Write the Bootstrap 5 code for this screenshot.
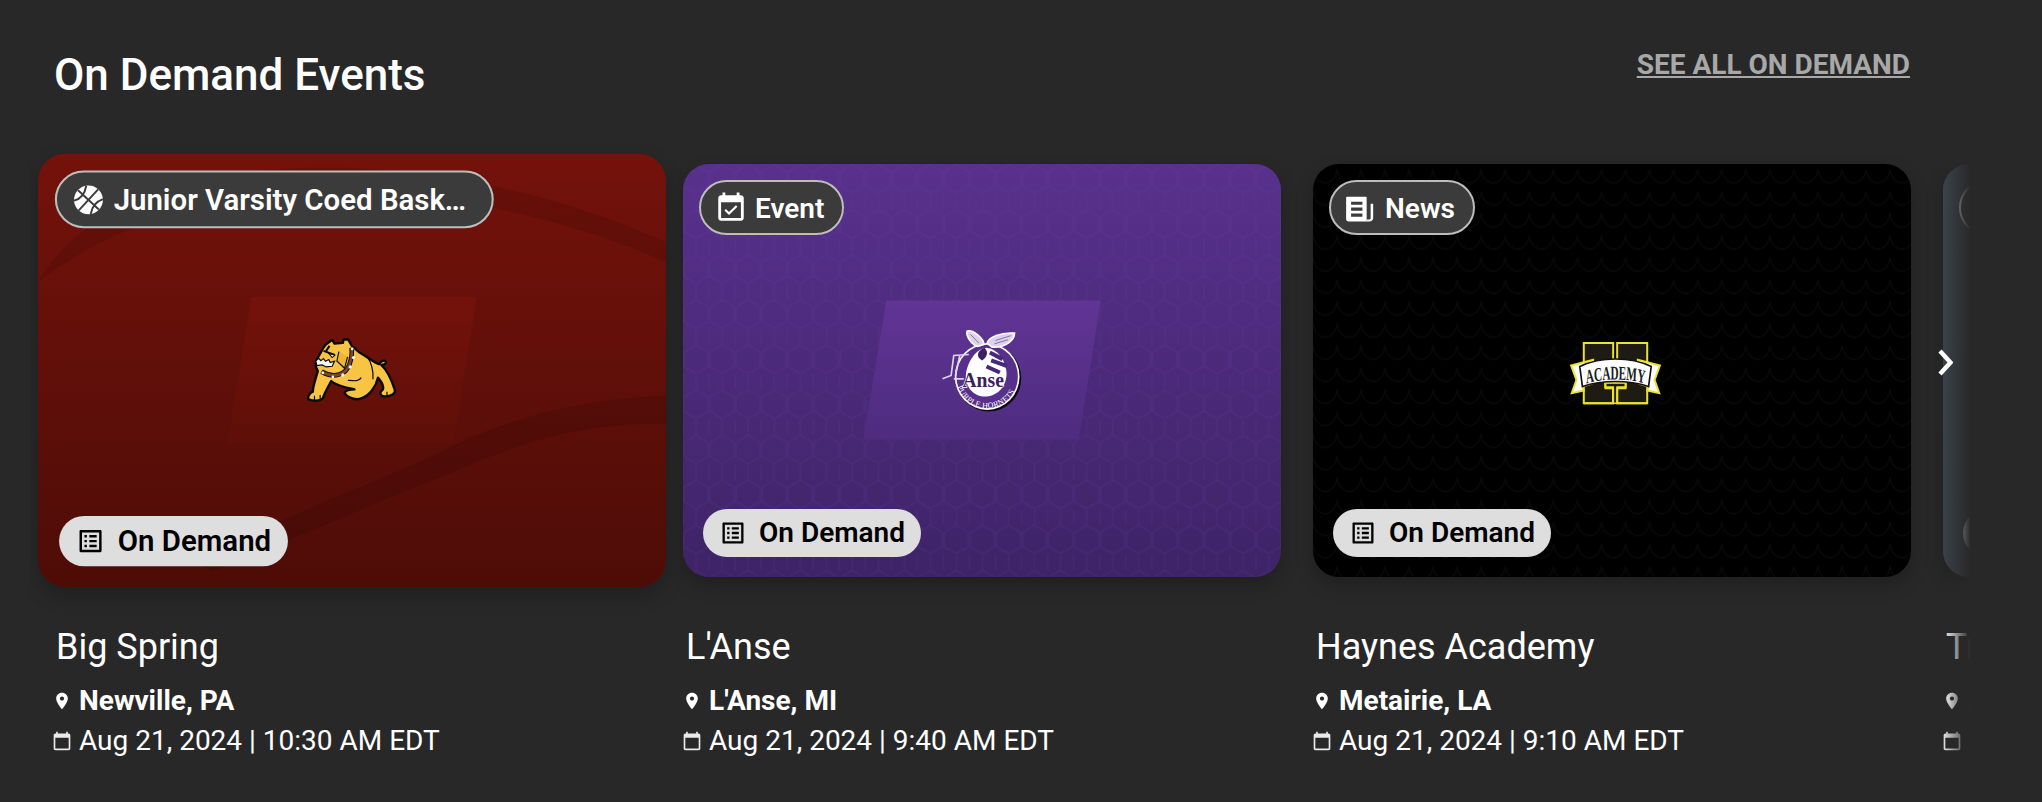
<!DOCTYPE html>
<html lang="en">
<head>
<meta charset="utf-8">
<title>On Demand Events</title>
<link href="https://cdn.jsdelivr.net/npm/bootstrap@5.3.0/dist/css/bootstrap.min.css" rel="stylesheet">
<style>
html,body{height:100%;}
body{background:#282828;color:#fff;font-family:Roboto,"Liberation Sans",sans-serif;overflow:hidden;}
.sec-head{padding:50px 132px 0 54px;height:140px;}
.sec-title{font-size:44px;font-weight:500;line-height:50px;margin:0;}
.see-all{font-size:28px;font-weight:700;line-height:32px;color:#a8a8a8;text-decoration:underline;margin-top:-1px;}
.see-all:hover{color:#a8a8a8;}
.rail-wrap{margin-left:30px;width:1942px;}
.rail{overflow:hidden;padding:24px 0 30px 23px;gap:32px;}
.slide{flex:0 0 598px;width:598px;}
.tile{height:413px;border-radius:26px;overflow:hidden;box-shadow:0 8px 18px rgba(0,0,0,.22);padding:16px 20px 20px 16px;}
.tile-hover{transform:scale(1.05);}
.tile-red{background:linear-gradient(#74120b,#4e0c07);}
.tile-purple{background:linear-gradient(#59318d,#3e2367);}
.tile-black{background:#000;}
.tile-slate{background:linear-gradient(100deg,#3d444e,#2b2f35);}
.art{position:absolute;inset:0;width:100%;height:100%;}
.pill-top,.pill-bottom{position:relative;border-radius:60px;font-size:28px;font-weight:600;line-height:1;white-space:nowrap;}
.pill-top{height:55px;background:#3b3b3b;border:2px solid #bdbdbd;padding:0 18px 0 13px;gap:7px;color:#fff;}
.pill-long{width:418px;padding-right:22px;}
.pill-label{padding-top:2px;}
.pill-bottom{height:48px;background:#dedede;color:#000;margin-left:4px;padding:0 16px 0 16px;gap:12px;width:218px;}
.ic-top{width:34px;height:34px;flex:none;fill:#fff;}
.ic-bottom{width:28px;height:28px;flex:none;fill:#000;}
.label-cut{overflow:hidden;white-space:nowrap;text-overflow:ellipsis;}
.meta{padding:47px 0 0 3px;}
.meta-title{font-size:36px;font-weight:400;line-height:46px;margin:0 0 11px;white-space:nowrap;}
.meta-line{font-size:28px;line-height:40px;white-space:nowrap;gap:7px;}
.meta-place{font-weight:700;}
.ic-meta{width:20px;height:20px;flex:none;fill:#fff;margin-left:-4px;}
.ic-cal{opacity:.9;}
.rail-fade{position:absolute;top:0;bottom:0;right:0;width:30px;background:linear-gradient(90deg,rgba(40,40,40,0),#282828 95%);pointer-events:none;}
.next-arrow{position:absolute;left:1908px;top:209px;width:15px;height:27px;}
</style>
</head>
<body>
<section>
  <div class="d-flex justify-content-between align-items-start sec-head">
    <h2 class="sec-title">On Demand Events</h2>
    <a class="see-all" href="#">SEE ALL ON DEMAND</a>
  </div>
  <div class="position-relative rail-wrap">
    <div class="d-flex rail">

      <!-- Card 1 -->
      <div class="slide">
        <div class="tile tile-red tile-hover position-relative d-flex flex-column justify-content-between align-items-start">
          <svg class="art" viewBox="0 0 597 412">
            <path d="M0 122C30 70 100 20 240 14C340 8 480 30 597 84L597 103C500 60 400 40 300 38C180 36 80 60 0 122Z" fill="#000" opacity=".1"/>
            <path d="M597 230C520 232 450 250 392 279C340 305 280 325 150 385L165 398C280 350 350 320 430 288C490 265 540 256 597 257Z" fill="#000" opacity=".1"/>
            <defs><linearGradient id="pr" x1="0" y1="0" x2="0" y2="1"><stop offset="0" stop-color="#74120b"/><stop offset="1" stop-color="#5e0f08"/></linearGradient></defs>
            <polygon points="203,136 417,136 395,275 180,275" fill="url(#pr)"/>
            <g transform="translate(229.5 158.8) scale(.3175)">
              <path d="M140 70L158 57L165 68L190 66L192 56L205 55L217 75L240 95C262 108 285 125 298 130C304 118 318 116 319 124C318 130 310 132 305 132C325 150 335 175 345 205C350 218 335 225 320 226C305 228 298 218 305 210C315 205 312 190 295 170C290 195 270 225 245 232C230 240 200 228 195 215C200 205 215 205 225 205C200 200 170 195 155 180C145 200 135 215 130 232C120 242 100 240 87 235C83 225 93 215 100 212C100 195 110 170 115 150C108 140 105 125 115 110C125 95 130 80 140 70Z" fill="#f7c443" stroke="#0a0a0a" stroke-width="7" stroke-linejoin="round"/>
              <path d="M126 152C160 172 198 165 210 130C216 112 218 95 216 80" fill="none" stroke="#1a0d08" stroke-width="14"/>
              <path d="M126 152C160 172 198 165 210 130C216 112 218 95 216 80" fill="none" stroke="#7a4632" stroke-width="8"/>
              <g fill="#f4f4f4"><circle cx="218" cy="84" r="4"/><circle cx="222" cy="110" r="5"/><circle cx="212" cy="138" r="5"/><circle cx="190" cy="162" r="5"/><circle cx="160" cy="168" r="4"/><circle cx="130" cy="156" r="4"/></g>
              <path d="M109 120L118 112L124 119L132 113L138 121L148 116L152 125L165 121L158 136L140 138L128 132L112 134Z" fill="#f4f4f4" stroke="#0a0a0a" stroke-width="3.5"/>
              <path d="M178 92L172 120L195 142L204 108" fill="#eeb436" stroke="#111" stroke-width="3.5"/>
              <path d="M132 90L166 102M150 75L140 90" fill="none" stroke="#0a0a0a" stroke-width="6"/>
              <path d="M148 98L166 103L158 110Z" fill="#f4f4f4" stroke="#0a0a0a" stroke-width="3"/>
              <path d="M245 170C238 182 225 180 205 178M262 105C275 125 282 150 280 175M122 222V236M105 224V237M322 212V224" fill="none" stroke="#0a0a0a" stroke-width="3.5"/>
            </g>
          </svg>
          <div class="pill-top pill-long d-flex align-items-center">
            <svg class="ic-top" viewBox="0 0 24 24"><circle cx="12" cy="12" r="9.7" fill="#fff"/><g fill="none" stroke="#3b3b3b" stroke-width="1.3"><path d="M2.3 12.5C6.5 11.5 9.5 8.5 10.5 2.5"/><path d="M13.5 21.5C14.5 16 17.5 13 21.7 11.5"/><path d="M5 5.5L19 18.5"/><path d="M18.5 5L5.5 19"/></g></svg>
            <span class="label-cut pill-label">Junior Varsity Coed Basketball</span>
          </div>
          <div class="pill-bottom d-flex align-items-center">
            <svg class="ic-bottom" viewBox="0 0 24 24"><path d="M19 5v14H5V5h14m1.1-2H3.9c-.5 0-.9.4-.9.9v16.2c0 .4.4.9.9.9h16.2c.4 0 .9-.5.9-.9V3.9c0-.5-.5-.9-.9-.9zM11 7h6v2h-6V7zm0 4h6v2h-6v-2zm0 4h6v2h-6zM7 7h2v2H7zm0 4h2v2H7zm0 4h2v2H7z"/></svg>
            <span>On Demand</span>
          </div>
        </div>
        <div class="meta">
          <h3 class="meta-title">Big Spring</h3>
          <div class="d-flex align-items-center meta-line meta-place"><svg class="ic-meta" viewBox="0 0 24 24"><path d="M12 2C8.13 2 5 5.13 5 9c0 5.25 7 13 7 13s7-7.75 7-13c0-3.87-3.13-7-7-7zm0 9.5c-1.38 0-2.5-1.12-2.5-2.5s1.12-2.5 2.5-2.5 2.5 1.12 2.5 2.5-1.12 2.5-2.5 2.5z"/></svg><span>Newville, PA</span></div>
          <div class="d-flex align-items-center meta-line"><svg class="ic-meta ic-cal" viewBox="0 0 24 24"><path d="M20 3h-1V1h-2v2H7V1H5v2H4c-1.1 0-2 .9-2 2v16c0 1.1.9 2 2 2h16c1.1 0 2-.9 2-2V5c0-1.1-.9-2-2-2zm0 18H4V8h16v13z"/></svg><span>Aug 21, 2024 | 10:30 AM EDT</span></div>
        </div>
      </div>

      <!-- Card 2 -->
      <div class="slide">
        <div class="tile tile-purple position-relative d-flex flex-column justify-content-between align-items-start">
          <svg class="art" viewBox="0 0 597 412">
            <defs>
              <pattern id="hex" width="26" height="45" patternUnits="userSpaceOnUse"><path d="M13 0.5L25 7.5V22L13 29L1 22V7.5ZM13 29V45M1 22L0 22.6M25 22L26 22.6M0 30V45M26 30V45" fill="none" stroke="#6a3fa3" stroke-opacity=".16" stroke-width="1.5"/></pattern>
              <linearGradient id="pp" x1="0" y1="0" x2="0" y2="1"><stop offset="0" stop-color="#613495"/><stop offset="1" stop-color="#4e2c7f"/></linearGradient>
            </defs>
            <rect width="597" height="412" fill="url(#hex)"/>
            <polygon points="203,136 417,136 395,275 180,275" fill="url(#pp)"/>
            <g transform="translate(237 146) scale(.3333)">
              <ellipse cx="205" cy="203" rx="97" ry="100" fill="#0e0a16"/>
              <ellipse cx="200" cy="198" rx="97" ry="100" fill="#fff"/>
              <ellipse cx="200" cy="198" rx="92" ry="95" fill="#57308b"/>
              <path d="M138 180C148 140 172 115 198 112C236 116 258 158 258 192C256 232 228 258 192 258C158 258 128 225 138 180Z" fill="#fff"/>
              <path d="M192 112C170 120 165 140 185 150C200 140 205 125 192 112Z" fill="#3c2160"/>
              <path d="M208 126L246 146M212 150L258 166M198 168L238 186" stroke="#46277a" stroke-width="12"/>
              <path d="M172 108C155 104 135 78 140 62C160 58 190 85 190 102Z" fill="#dcd2ea" stroke="#fff" stroke-width="5"/>
              <path d="M200 98C205 80 240 65 282 68C282 90 255 112 215 110Z" fill="#dcd2ea" stroke="#fff" stroke-width="5"/>
              <path d="M150 72L175 98M225 90L270 76M222 100L262 88" stroke="#7a5aa6" stroke-width="2.5"/>
              <path d="M145 132L100 135L92 195L66 205M118 135L105 195M100 205H130" fill="none" stroke="#ded5ec" stroke-width="5"/>
              <text x="126" y="228" font-family="'Liberation Serif',serif" font-size="64" font-weight="700" fill="#3c2160" stroke="#fff" stroke-width="4" paint-order="stroke" textLength="124" lengthAdjust="spacingAndGlyphs">Anse</text>
              <path id="arc-l" d="M109 226A92 92 0 0 0 289 172" fill="none"/>
              <text font-family="'Liberation Serif',serif" font-size="24" fill="#fff" letter-spacing="1"><textPath href="#arc-l" startOffset="1%">PURPLE HORNETS</textPath></text>
            </g>
          </svg>
          <div class="pill-top d-flex align-items-center">
            <svg class="ic-top" viewBox="0 0 24 24"><path d="M16.53 11.06 15.47 10l-4.88 4.88-2.12-2.12-1.06 1.06L10.59 17l5.94-5.94zM19 3h-1V1h-2v2H8V1H6v2H5c-1.11 0-1.99.9-1.99 2L3 19c0 1.1.89 2 2 2h14c1.1 0 2-.9 2-2V5c0-1.1-.9-2-2-2zm0 16H5V8h14v11z"/></svg>
            <span class="pill-label">Event</span>
          </div>
          <div class="pill-bottom d-flex align-items-center">
            <svg class="ic-bottom" viewBox="0 0 24 24"><path d="M19 5v14H5V5h14m1.1-2H3.9c-.5 0-.9.4-.9.9v16.2c0 .4.4.9.9.9h16.2c.4 0 .9-.5.9-.9V3.9c0-.5-.5-.9-.9-.9zM11 7h6v2h-6V7zm0 4h6v2h-6v-2zm0 4h6v2h-6zM7 7h2v2H7zm0 4h2v2H7zm0 4h2v2H7z"/></svg>
            <span>On Demand</span>
          </div>
        </div>
        <div class="meta">
          <h3 class="meta-title">L'Anse</h3>
          <div class="d-flex align-items-center meta-line meta-place"><svg class="ic-meta" viewBox="0 0 24 24"><path d="M12 2C8.13 2 5 5.13 5 9c0 5.25 7 13 7 13s7-7.75 7-13c0-3.87-3.13-7-7-7zm0 9.5c-1.38 0-2.5-1.12-2.5-2.5s1.12-2.5 2.5-2.5 2.5 1.12 2.5 2.5-1.12 2.5-2.5 2.5z"/></svg><span>L'Anse, MI</span></div>
          <div class="d-flex align-items-center meta-line"><svg class="ic-meta ic-cal" viewBox="0 0 24 24"><path d="M20 3h-1V1h-2v2H7V1H5v2H4c-1.1 0-2 .9-2 2v16c0 1.1.9 2 2 2h16c1.1 0 2-.9 2-2V5c0-1.1-.9-2-2-2zm0 18H4V8h16v13z"/></svg><span>Aug 21, 2024 | 9:40 AM EDT</span></div>
        </div>
      </div>

      <!-- Card 3 -->
      <div class="slide">
        <div class="tile tile-black position-relative d-flex flex-column justify-content-between align-items-start">
          <svg class="art" viewBox="0 0 597 412">
            <defs><pattern id="scale" width="24" height="22" patternUnits="userSpaceOnUse"><path d="M0 5C1 17 10 19 12 19C14 19 23 17 24 5" fill="none" stroke="#090909" stroke-width="1.5"/></pattern></defs>
            <rect width="597" height="412" fill="url(#scale)"/>
            <g transform="translate(237 156) scale(.3333)">
              <path d="M100 68H188V248H100ZM200 68H290V248H200Z" fill="#1e1b14" stroke="#ece132" stroke-width="6"/>
              <path d="M164 187H226V200H200V248H188V200H164Z" fill="#1e1b14" stroke="#ece132" stroke-width="5"/>
              <path d="M100 248H188V203H165V185H225V203H200V248H290" fill="none" stroke="#ece132" stroke-width="6"/>
              <path d="M62 135L128 118L124 190L96 198L100 210L64 218L78 178Z" fill="#fff" stroke="#ece132" stroke-width="6"/>
              <path d="M328 135L262 118L266 190L294 198L290 210L326 218L312 178Z" fill="#fff" stroke="#ece132" stroke-width="6"/>
              <path d="M88 138C150 108 240 108 302 138L294 198C235 178 155 178 96 198Z" fill="#fff" stroke="#111" stroke-width="5"/>
              <g transform="translate(195 0) scale(.58 1) translate(-195 0)">
                <path id="arc-a" d="M31 192C130 172 260 172 359 192" fill="none"/>
                <text font-family="'Liberation Serif',serif" font-size="58" font-weight="700" fill="#1a1a1a" text-anchor="middle"><textPath href="#arc-a" startOffset="50%">ACADEMY</textPath></text>
              </g>
            </g>
          </svg>
          <div class="pill-top d-flex align-items-center">
            <svg class="ic-top" viewBox="0 0 24 24"><path d="M2 4H15.5A.5.5 0 0 1 16 4.5V21.5H3A1.5 1.5 0 0 1 1.5 20V4.5A.5.5 0 0 1 2 4ZM5 7.5V9.7H13V7.5ZM5 11.7V13.9H13V11.7ZM5 15.9V18.1H13V15.9Z" fill-rule="evenodd"/><path d="M16 20.2H17.6C18.3 20.2 18.8 19.8 18.8 19V9H20.6V19C20.6 20.6 19.3 21.5 17.9 21.5H16Z"/></svg>
            <span class="pill-label">News</span>
          </div>
          <div class="pill-bottom d-flex align-items-center">
            <svg class="ic-bottom" viewBox="0 0 24 24"><path d="M19 5v14H5V5h14m1.1-2H3.9c-.5 0-.9.4-.9.9v16.2c0 .4.4.9.9.9h16.2c.4 0 .9-.5.9-.9V3.9c0-.5-.5-.9-.9-.9zM11 7h6v2h-6V7zm0 4h6v2h-6v-2zm0 4h6v2h-6zM7 7h2v2H7zm0 4h2v2H7zm0 4h2v2H7z"/></svg>
            <span>On Demand</span>
          </div>
        </div>
        <div class="meta">
          <h3 class="meta-title">Haynes Academy</h3>
          <div class="d-flex align-items-center meta-line meta-place"><svg class="ic-meta" viewBox="0 0 24 24"><path d="M12 2C8.13 2 5 5.13 5 9c0 5.25 7 13 7 13s7-7.75 7-13c0-3.87-3.13-7-7-7zm0 9.5c-1.38 0-2.5-1.12-2.5-2.5s1.12-2.5 2.5-2.5 2.5 1.12 2.5 2.5-1.12 2.5-2.5 2.5z"/></svg><span>Metairie, LA</span></div>
          <div class="d-flex align-items-center meta-line"><svg class="ic-meta ic-cal" viewBox="0 0 24 24"><path d="M20 3h-1V1h-2v2H7V1H5v2H4c-1.1 0-2 .9-2 2v16c0 1.1.9 2 2 2h16c1.1 0 2-.9 2-2V5c0-1.1-.9-2-2-2zm0 18H4V8h16v13z"/></svg><span>Aug 21, 2024 | 9:10 AM EDT</span></div>
        </div>
      </div>

      <!-- Card 4, almost entirely behind the fade -->
      <div class="slide">
        <div class="tile tile-slate position-relative d-flex flex-column justify-content-between align-items-start">
          <div class="pill-top pill-long"></div>
          <div class="pill-bottom"></div>
        </div>
        <div class="meta">
          <h3 class="meta-title">Tr</h3>
          <div class="d-flex align-items-center meta-line meta-place"><svg class="ic-meta" viewBox="0 0 24 24"><path d="M12 2C8.13 2 5 5.13 5 9c0 5.25 7 13 7 13s7-7.75 7-13c0-3.87-3.13-7-7-7zm0 9.5c-1.38 0-2.5-1.12-2.5-2.5s1.12-2.5 2.5-2.5 2.5 1.12 2.5 2.5-1.12 2.5-2.5 2.5z"/></svg><span>A</span></div>
          <div class="d-flex align-items-center meta-line"><svg class="ic-meta ic-cal" viewBox="0 0 24 24"><path d="M20 3h-1V1h-2v2H7V1H5v2H4c-1.1 0-2 .9-2 2v16c0 1.1.9 2 2 2h16c1.1 0 2-.9 2-2V5c0-1.1-.9-2-2-2zm0 18H4V8h16v13z"/></svg><span>A</span></div>
        </div>
      </div>

    </div>
    <div class="rail-fade"></div>
    <svg class="next-arrow" viewBox="0 0 15 27"><path d="M2 2L12.5 13.5L2 25" fill="none" stroke="#fff" stroke-width="4.4"/></svg>
  </div>
</section>
<script src="https://cdn.jsdelivr.net/npm/bootstrap@5.3.0/dist/js/bootstrap.bundle.min.js"></script>
</body>
</html>
